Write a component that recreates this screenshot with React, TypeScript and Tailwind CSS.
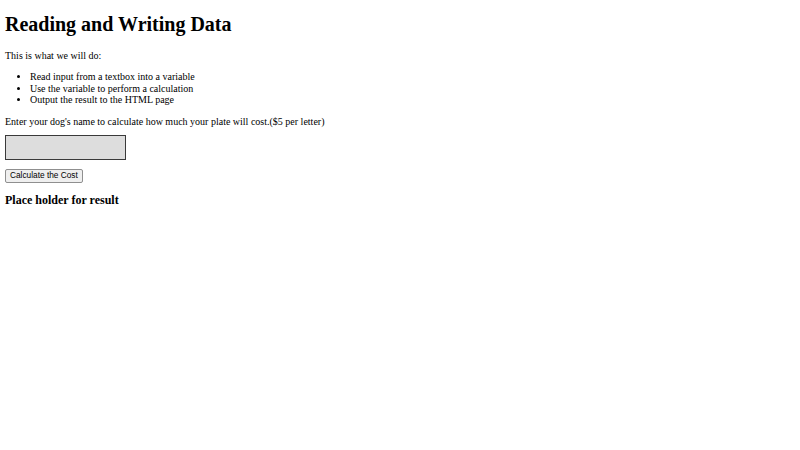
import React, { useState } from "react";

const App = () => {
    const [name, setName] = useState("");
    const [result, setResult] = useState("Place holder for result");

    const calculate = () => {
        const letters = name.replace(/\s/g, "").length;
        setResult(letters ? `Your plate will cost $${letters * 5}` : "Place holder for result");
    };

    return (
        <div className="min-h-[450px] bg-white px-[5px] text-[10px] leading-[11.5px] text-black font-['Liberation_Serif',serif]">
            <h1 className="mt-[13.4px] mb-[13.4px] text-[20px] leading-[23px] font-bold">Reading and Writing Data</h1>
            <p className="my-[10px]">This is what we will do:</p>
            <ul className="my-[10px] list-disc pl-[25px]">
                <li>Read input from a textbox into a variable</li>
                <li>Use the variable to perform a calculation</li>
                <li>Output the result to the HTML page</li>
            </ul>
            <p className="mt-[10px] mb-[8px]">Enter your dog's name to calculate how much your plate will cost.($5 per letter)</p>
            <input
                type="text"
                value={name}
                onChange={(e) => setName(e.target.value)}
                className="block h-[24.6px] w-[121px] border-[1.5px] border-[#3a3a3a] bg-[#dddddd] px-[2px] text-[10px] outline-none"
            />
            <button
                onClick={calculate}
                className="mt-[9.3px] block h-[13.5px] rounded-[2px] border border-[#8f8f8f] bg-[#efefef] px-[4px] text-[8.3px] leading-[11px] text-black font-['Liberation_Sans',sans-serif]"
            >
                Calculate the Cost
            </button>
            <h3 className="mt-[11.7px] mb-[11.7px] text-[12px] leading-[13.5px] font-bold">{result}</h3>
        </div>
    );
};

export default App;
